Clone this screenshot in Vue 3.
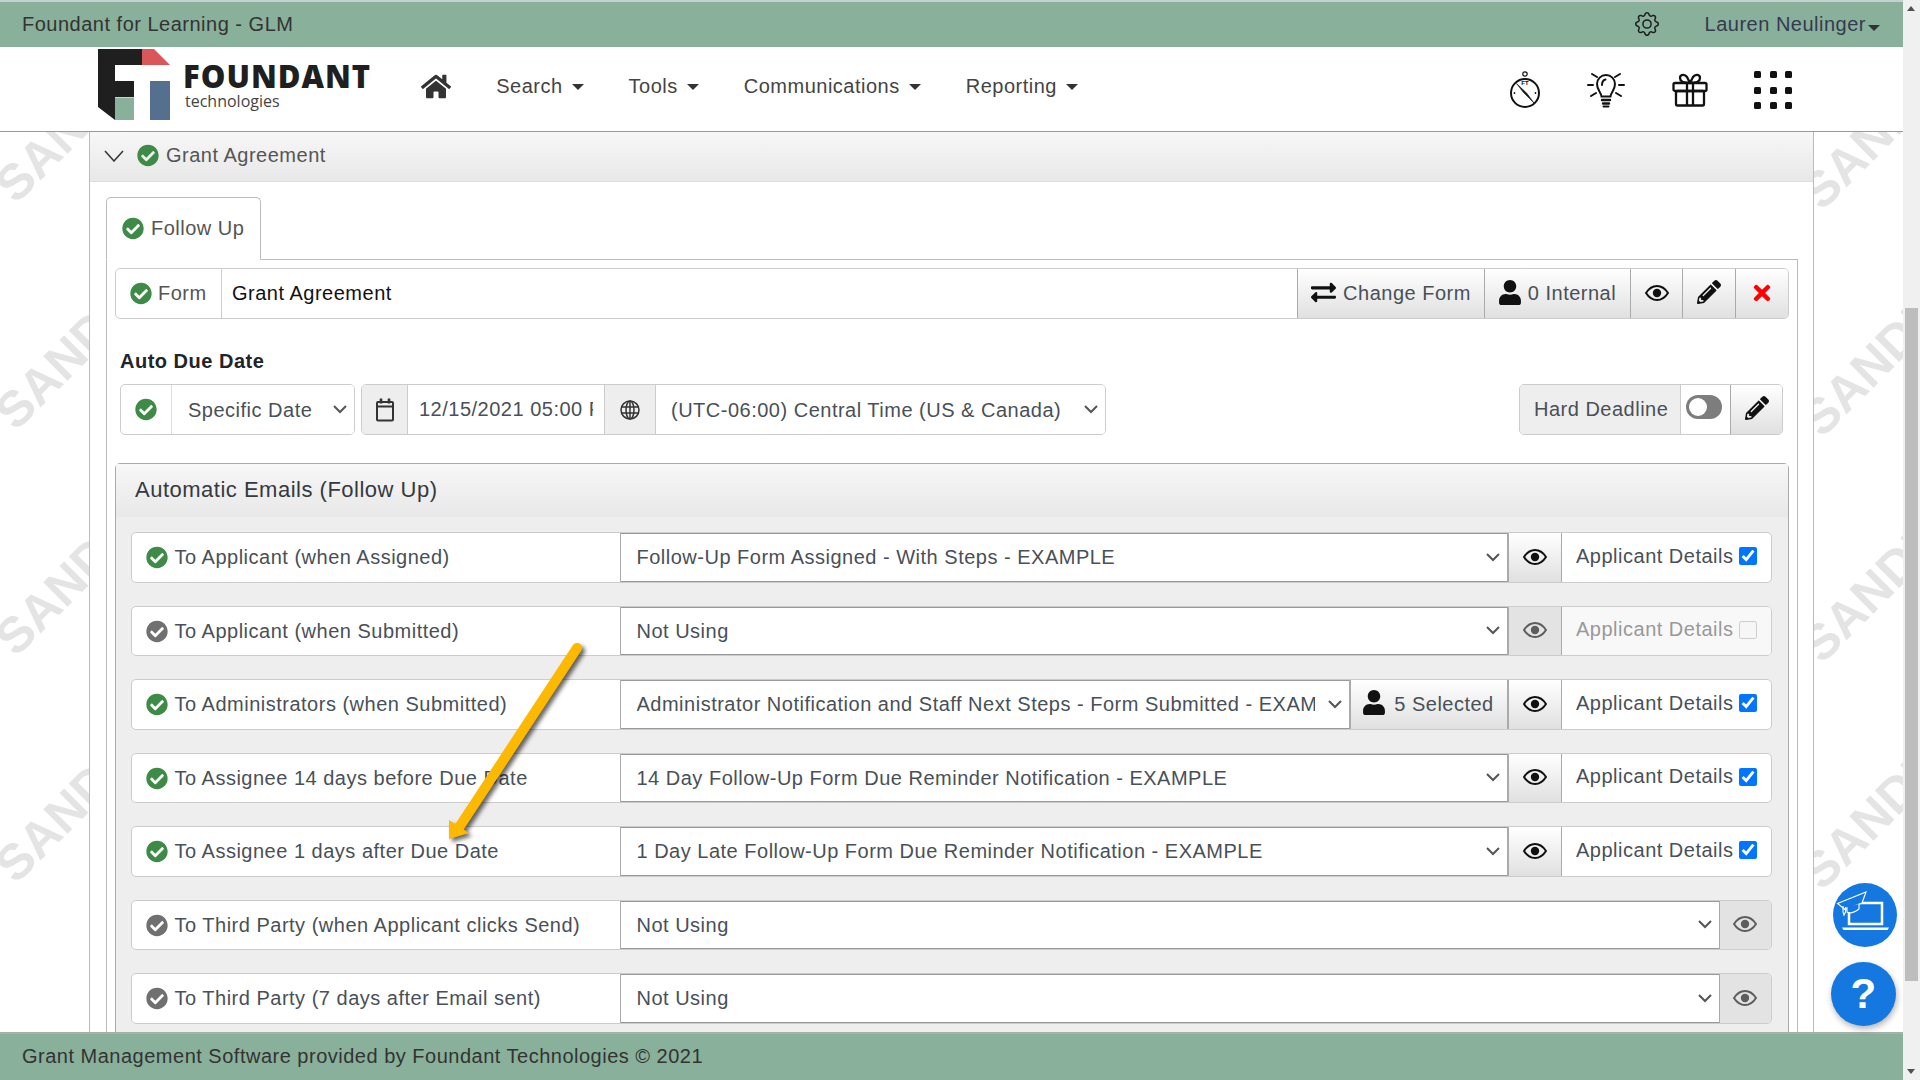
<script setup>
const menus = ["Search", "Tools", "Communications", "Reporting"]

const rows = [
  { label: "To Applicant (when Assigned)", value: "Follow-Up Form Assigned - With Steps - EXAMPLE", on: true, details: true },
  { label: "To Applicant (when Submitted)", value: "Not Using", on: false, details: true },
  { label: "To Administrators (when Submitted)", value: "Administrator Notification and Staff Next Steps - Form Submitted - EXAMPLE", on: true, details: true, selected: "5 Selected" },
  { label: "To Assignee 14 days before Due Date", value: "14 Day Follow-Up Form Due Reminder Notification - EXAMPLE", on: true, details: true },
  { label: "To Assignee 1 days after Due Date", value: "1 Day Late Follow-Up Form Due Reminder Notification - EXAMPLE", on: true, details: true },
  { label: "To Third Party (when Applicant clicks Send)", value: "Not Using", on: false, details: false },
  { label: "To Third Party (7 days after Email sent)", value: "Not Using", on: false, details: false },
]

// the sandbox stamp repeats down both margins
const stamps = []
for (let i = 0; i < 4; i++) {
  stamps.push({ left: 4, top: 36 + i * 226.5 })
  stamps.push({ left: 1810, top: 43 + i * 226.5 })
}

const checkPath = "M504 256c0 136.967-111.033 248-248 248S8 392.967 8 256 119.033 8 256 8s248 111.033 248 248zM227.314 387.314l184-184c6.248-6.248 6.248-16.379 0-22.627l-22.627-22.627c-6.248-6.249-16.379-6.249-22.628 0L216 308.118l-70.059-70.059c-6.248-6.248-16.379-6.248-22.628 0l-22.627 22.627c-6.248 6.248-6.248 16.379 0 22.627l104 104c6.249 6.249 16.379 6.249 22.628.001z"
const pencilPath = "M497.9 142.1l-46.1 46.1c-4.7 4.7-12.3 4.7-17 0l-111-111c-4.7-4.7-4.7-12.3 0-17l46.1-46.1c18.7-18.7 49.1-18.7 67.9 0l60.1 60.1c18.8 18.7 18.8 49.1 0 67.9zM284.2 99.8L21.6 362.4.4 483.9c-2.9 16.4 11.4 30.6 27.8 27.8l121.5-21.3 262.6-262.6c4.7-4.7 4.7-12.3 0-17l-111-111c-4.8-4.7-12.4-4.7-17.1 0zM124.1 339.9c-5.5-5.5-5.5-14.3 0-19.8l154-154c5.5-5.5 14.3-5.5 19.8 0s5.5 14.3 0 19.8l-154 154c-5.5 5.5-14.3 5.5-19.8 0zM88 424h48v36.3l-64.5 11.3-31.1-31.1L51.7 376H88v48z"
const userPath = "M224 256c70.7 0 128-57.3 128-128S294.7 0 224 0 96 57.3 96 128s57.3 128 128 128zm89.6 32h-16.7c-22.2 10.2-46.9 16-72.9 16s-50.6-5.8-72.9-16h-16.7C60.2 288 0 348.2 0 422.4V464c0 26.5 21.5 48 48 48h352c26.5 0 48-21.5 48-48v-41.6c0-74.2-60.2-134.4-134.4-134.4z"
</script>

<template>
  <div class="app">
    <div class="page">
      <div class="topbar">
        <span>Foundant for Learning - GLM</span>
        <svg class="gear" viewBox="0 0 16 16" fill="#1d1d1d">
          <path d="M8 4.754a3.246 3.246 0 1 0 0 6.492 3.246 3.246 0 0 0 0-6.492zM5.754 8a2.246 2.246 0 1 1 4.492 0 2.246 2.246 0 0 1-4.492 0z" />
          <path d="M9.796 1.343c-.527-1.79-3.065-1.79-3.592 0l-.094.319a.873.873 0 0 1-1.255.52l-.292-.16c-1.64-.892-3.433.902-2.54 2.541l.159.292a.873.873 0 0 1-.52 1.255l-.319.094c-1.79.527-1.79 3.065 0 3.592l.319.094a.873.873 0 0 1 .52 1.255l-.16.292c-.892 1.64.901 3.434 2.541 2.54l.292-.159a.873.873 0 0 1 1.255.52l.094.319c.527 1.79 3.065 1.79 3.592 0l.094-.319a.873.873 0 0 1 1.255-.52l.292.16c1.64.893 3.434-.902 2.54-2.541l-.159-.292a.873.873 0 0 1 .52-1.255l.319-.094c1.79-.527 1.79-3.065 0-3.592l-.319-.094a.873.873 0 0 1-.52-1.255l.16-.292c.893-1.64-.902-3.433-2.541-2.54l-.292.159a.873.873 0 0 1-1.255-.52l-.094-.319zm-2.633.283c.246-.835 1.428-.835 1.674 0l.094.319a1.873 1.873 0 0 0 2.693 1.115l.291-.16c.764-.415 1.6.42 1.184 1.185l-.159.292a1.873 1.873 0 0 0 1.116 2.692l.318.094c.835.246.835 1.428 0 1.674l-.319.094a1.873 1.873 0 0 0-1.115 2.693l.16.291c.415.764-.42 1.6-1.185 1.184l-.291-.159a1.873 1.873 0 0 0-2.693 1.116l-.094.318c-.246.835-1.428.835-1.674 0l-.094-.319a1.873 1.873 0 0 0-2.692-1.115l-.292.16c-.764.415-1.6-.42-1.184-1.185l.159-.291A1.873 1.873 0 0 0 1.945 8.93l-.319-.094c-.835-.246-.835-1.428 0-1.674l.319-.094A1.873 1.873 0 0 0 3.06 4.377l-.16-.292c-.415-.764.42-1.6 1.185-1.184l.292.159a1.873 1.873 0 0 0 2.692-1.115l.094-.319z" />
        </svg>
        <span class="user">Lauren Neulinger<i class="caret user-caret"></i></span>
      </div>

      <nav class="nav">
        <div class="logo">
          <svg class="logo-mark" viewBox="0 0 72 71">
            <path fill="#1f1f1f" d="M0 0h44v16H17v16h19v16H17v23L0 58z" />
            <path fill="#d9575b" d="M44 0h12l16 16H44z" />
            <rect fill="#88b09a" x="17" y="48.5" width="19" height="22.5" />
            <rect fill="#55708f" x="52" y="32" width="20" height="39" />
          </svg>
          <div class="logo-text">
            <div class="logo-name">FOUNDANT</div>
            <div class="logo-sub">technologies</div>
          </div>
        </div>
        <svg class="home" viewBox="0 0 576 512" fill="#333">
          <path d="M280.37 148.26L96 300.11V464a16 16 0 0 0 16 16l112.06-.29a16 16 0 0 0 15.92-16V368a16 16 0 0 1 16-16h64a16 16 0 0 1 16 16v95.64a16 16 0 0 0 16 16.05L464 480a16 16 0 0 0 16-16V300L295.67 148.26a12.19 12.19 0 0 0-15.3 0zM571.6 251.47L488 182.56V44.05a12 12 0 0 0-12-12h-56a12 12 0 0 0-12 12v72.61L318.47 43a48 48 0 0 0-61 0L4.34 251.47a12 12 0 0 0-1.6 16.9l25.5 31A12 12 0 0 0 45.15 301l235.22-193.74a12.19 12.19 0 0 1 15.3 0L530.9 301a12 12 0 0 0 16.9-1.6l25.5-31a12 12 0 0 0-1.7-16.93z" />
        </svg>
        <a v-for="m in menus" :key="m" class="menu">{{ m }}<i class="caret"></i></a>

        <div class="nav-icons">
          <svg width="30" height="38" viewBox="0 0 30 38" fill="none" stroke="#111">
            <circle cx="15" cy="3" r="2.2" stroke-width="1.2" />
            <circle cx="15" cy="22" r="14" stroke-width="2" />
            <path d="M6.5 12.5 L17 22.5 L24 32 L13.5 21.5 Z" fill="#111" stroke-width="0.6" />
            <text x="15" y="14" font-size="6" font-weight="700" text-anchor="middle" fill="#111" stroke="none" font-family="Liberation Sans, sans-serif" letter-spacing="0">FT</text>
            <circle cx="4.5" cy="22" r="0.9" fill="#111" stroke="none" />
            <circle cx="25.5" cy="22" r="0.9" fill="#111" stroke="none" />
          </svg>
          <svg width="38" height="36" viewBox="0 0 38 36" fill="none" stroke="#111" stroke-width="2" stroke-linecap="round">
            <path d="M14.5 24.5 C14 20 10 18 10 12 C10 7 14 3 19 3 C24 3 28 7 28 12 C28 18 24 20 23.5 24.5 Z" />
            <path d="M15 13 C15 9.5 16.5 8 18.5 7.5" />
            <path d="M15 28h8M16 31.5h6" stroke-width="2.4" />
            <path d="M16.5 34.5h5" />
            <path d="M5 2l5 3M33 2l-5 3M1 13h5M32 13h5M4 24l5-3M34 24l-5-3" />
          </svg>
          <svg width="36" height="34" viewBox="0 0 36 34" fill="none" stroke="#111" stroke-width="2.3" stroke-linejoin="round">
            <rect x="1.5" y="10" width="33" height="8" rx="1.5" />
            <rect x="4" y="18" width="28" height="14.5" rx="1.5" />
            <path d="M15 10v22.5M21 10v22.5" />
            <path d="M18 10 C14 10 8 9 8 5 C8 1 13 1 15 4 L18 10 L21 4 C23 1 28 1 28 5 C28 9 22 10 18 10Z" />
          </svg>
          <div class="grid-icon"><i v-for="n in 9" :key="n"></i></div>
        </div>
      </nav>

      <main class="main">
        <span v-for="(s, i) in stamps" :key="i" class="stamp" :style="{ left: s.left + 'px', top: s.top + 'px' }">SANDBOX</span>

        <section class="card">
          <header class="card-head">
            <svg class="chev" viewBox="0 0 20 12" fill="none" stroke="#333" stroke-width="1.5"><path d="M1 1l9 10 9-10" /></svg>
            <svg class="check ok" viewBox="0 0 512 512"><path :d="checkPath" /></svg>
            <span class="head-title">Grant Agreement</span>
          </header>

          <div class="card-body">
            <div class="tabs">
              <div class="tab">
                <svg class="check ok" viewBox="0 0 512 512"><path :d="checkPath" /></svg>
                <span>Follow Up</span>
              </div>
            </div>

            <div class="pane">
              <div class="group form-row">
                <div class="form-label">
                  <svg class="check ok" viewBox="0 0 512 512"><path :d="checkPath" /></svg>
                  <span>Form</span>
                </div>
                <div class="form-name">Grant Agreement</div>
                <button class="btn w-change">
                  <svg class="ico-exchange" viewBox="0 0 512 512"><path d="M0 168v-16c0-13.255 10.745-24 24-24h360V80c0-21.367 25.899-32.042 40.971-16.971l80 80c9.372 9.373 9.372 24.569 0 33.941l-80 80C409.956 272.982 384 262.456 384 240v-48H24c-13.255 0-24-10.745-24-24zm488 152H128v-48c0-21.314-25.862-32.08-40.971-16.971l-80 80c-9.372 9.373-9.372 24.569 0 33.941l80 80C102.057 464.973 128 454.544 128 432v-48h360c13.255 0 24-10.745 24-24v-16c0-13.255-10.745-24-24-24z" /></svg>
                  Change Form
                </button>
                <button class="btn w-internal">
                  <svg class="ico-user" viewBox="0 0 448 512"><path :d="userPath" /></svg>
                  0 Internal
                </button>
                <button class="btn w-icon">
                  <svg class="eye" viewBox="0 0 24 17" fill="none" stroke="currentColor" stroke-width="2"><path d="M1 8.5C4.5 3 8 1.5 12 1.5s7.5 1.5 11 7c-3.5 5.5-7 7-11 7s-7.5-1.5-11-7z" /><circle cx="12" cy="8.5" r="4.2" fill="currentColor" stroke="none" /></svg>
                </button>
                <button class="btn w-icon-b">
                  <svg class="ico-pencil" viewBox="0 0 512 512"><path :d="pencilPath" /></svg>
                </button>
                <button class="btn w-icon-b">
                  <svg class="ico-x" viewBox="0 0 352 512" fill="#f00"><path d="M242.72 256l100.07-100.07c12.28-12.28 12.28-32.19 0-44.48l-22.24-22.24c-12.28-12.28-32.19-12.28-44.48 0L176 189.28 75.93 89.21c-12.28-12.28-32.19-12.28-44.48 0L9.21 111.45c-12.28 12.28-12.28 32.19 0 44.48L109.28 256 9.21 356.07c-12.28 12.28-12.28 32.19 0 44.48l22.24 22.24c12.28 12.28 32.2 12.28 44.48 0L176 322.72l100.07 100.07c12.28 12.28 32.2 12.28 44.48 0l22.24-22.24c12.28-12.28 12.28-32.19 0-44.48L242.72 256z" /></svg>
                </button>
              </div>

              <div class="due-title">Auto Due Date</div>
              <div class="due-row">
                <div class="group">
                  <div class="due-check"><svg class="check ok" viewBox="0 0 512 512"><path :d="checkPath" /></svg></div>
                  <select class="sel sel-kind"><option>Specific Date</option></select>
                </div>
                <div class="group">
                  <div class="addon">
                    <svg width="18" height="24" viewBox="0 0 18 24" fill="none" stroke="#333" stroke-width="2"><rect x="1" y="4" width="16" height="18.5" rx="1" /><path d="M1 8.5h16" /><path d="M5 0.5v5M13 0.5v5" stroke-width="2.6" /></svg>
                  </div>
                  <input class="date" value="12/15/2021 05:00 PM" />
                  <div class="addon globe-cell">
                    <svg width="20" height="20" viewBox="0 0 20 20" fill="none" stroke="#333" stroke-width="1.5"><circle cx="10" cy="10" r="9" /><ellipse cx="10" cy="10" rx="4" ry="9" /><path d="M1.5 7h17M1.5 13h17M10 1v18" /></svg>
                  </div>
                  <select class="sel sel-zone"><option>(UTC-06:00) Central Time (US &amp; Canada)</option></select>
                </div>
                <div class="group hard">
                  <div class="hard-label">Hard Deadline</div>
                  <div class="hard-toggle"><span class="toggle"><i></i></span></div>
                  <button class="btn w-hard"><svg class="ico-pencil" viewBox="0 0 512 512"><path :d="pencilPath" /></svg></button>
                </div>
              </div>

              <section class="panel">
                <header class="panel-head">Automatic Emails (Follow Up)</header>
                <div class="panel-body">
                  <div v-for="r in rows" :key="r.label" class="group mail-row">
                    <div class="mail-label">
                      <svg class="check" :class="r.on ? 'ok' : 'off'" viewBox="0 0 512 512"><path :d="checkPath" /></svg>
                      <span>{{ r.label }}</span>
                    </div>
                    <select class="sel sel-mail"><option>{{ r.value }}</option></select>
                    <button v-if="r.selected" class="btn w-selected">
                      <svg class="ico-user" viewBox="0 0 448 512"><path :d="userPath" /></svg>
                      {{ r.selected }}
                    </button>
                    <button class="btn w-eye" :class="{ dim: !r.on, narrow: !r.details }">
                      <svg class="eye" viewBox="0 0 24 17" fill="none" stroke="currentColor" stroke-width="2"><path d="M1 8.5C4.5 3 8 1.5 12 1.5s7.5 1.5 11 7c-3.5 5.5-7 7-11 7s-7.5-1.5-11-7z" /><circle cx="12" cy="8.5" r="4.2" fill="currentColor" stroke="none" /></svg>
                    </button>
                    <label v-if="r.details" class="details" :class="{ dim: !r.on }">
                      Applicant Details
                      <input type="checkbox" :checked="r.on" :disabled="!r.on" />
                    </label>
                  </div>
                </div>
              </section>
            </div>
          </div>
        </section>
      </main>

      <footer class="footer">Grant Management Software provided by Foundant Technologies © 2021</footer>
    </div>

    <div class="scrollbar">
      <i class="sb-up"></i>
      <div class="sb-thumb"></div>
      <i class="sb-down"></i>
    </div>

    <!-- annotation drawn over the form -->
    <svg class="arrow" width="150" height="210" viewBox="0 0 150 210">
      <path d="M137 8L18 189" stroke="#fdb900" stroke-width="10" stroke-linecap="round" fill="none" />
      <path d="M9 199V180L29 193Z" fill="#fdb900" />
    </svg>

    <div class="fab fab-learn">
      <svg width="64" height="64" viewBox="0 0 64 64" fill="none" stroke="#fff">
        <rect x="16" y="20" width="33" height="21" stroke-width="2.5" />
        <path d="M9 44.5h47l-1.5 2.5H10.5z" fill="#fff" stroke="none" />
        <path d="M4.5 20.5L33 9 29 20 12 26.5Z" fill="#1478e0" stroke-width="1.1" />
        <path d="M14 24v5c3 2 8 0 12-3v-5" fill="#1478e0" stroke-width="1.1" />
        <path d="M10 23v6l1 3 1.5-3v-5" stroke-width="1.1" />
      </svg>
    </div>
    <div class="fab fab-help">?</div>
  </div>
</template>

<style>
html, body {
  margin: 0;
  overflow: hidden;
}
</style>

<style scoped>
* {
  box-sizing: border-box;
}

.app {
  position: relative;
  display: flex;
  width: 1920px;
  height: 1080px;
  overflow: hidden;
  background: #fff;
  font-family: "Liberation Sans", Arial, sans-serif;
  font-size: 20px;
  letter-spacing: 0.5px;
  color: #495057;
}

.page {
  display: flex;
  flex-direction: column;
  flex: 1;
  min-width: 0;
}

.topbar {
  display: flex;
  align-items: center;
  flex: none;
  height: 47px;
  padding: 0 23px 0 22px;
  border-top: 2px solid #c9cfcc;
  background: #88b09a;
  color: #333;
}

.gear {
  width: 24px;
  height: 24px;
  margin-left: auto;
  margin-bottom: 2px;
}

.user {
  margin-left: 46px;
  color: #343a50;
}

.caret {
  display: inline-block;
  width: 0;
  height: 0;
  margin-left: 9px;
  vertical-align: 3px;
  border-top: 6px solid #333;
  border-left: 6px solid transparent;
  border-right: 6px solid transparent;
}

.user-caret {
  margin-left: 2px;
  vertical-align: 0;
}

.nav {
  display: flex;
  align-items: center;
  flex: none;
  height: 85px;
  padding: 0 111px 0 98px;
  gap: 45px;
  border-bottom: 1px solid #999;
  background: #fff;
  color: #444;
}

.logo {
  display: flex;
  align-items: flex-start;
  gap: 13px;
  height: 71px;
  margin-top: -9px;
  margin-right: 5px;
}

.logo-mark {
  width: 72px;
  height: 71px;
}

.logo-text {
  padding-top: 13px;
  color: #1f1f1f;
  font-family: "Open Sans", sans-serif;
}

.logo-name {
  font-size: 31px;
  font-weight: 800;
  line-height: 29px;
  letter-spacing: 1px;
}

.logo-sub {
  padding-left: 2px;
  font-size: 16px;
  line-height: 20px;
  letter-spacing: 0;
  color: #444;
}

.home {
  width: 30px;
  height: 27px;
  margin-bottom: 6px;
}

.menu {
  margin-bottom: 5px;
  white-space: nowrap;
}

.nav-icons {
  display: flex;
  align-items: center;
  gap: 47px;
  margin-left: auto;
  margin-top: 2px;
}

.grid-icon {
  display: grid;
  grid-template-columns: repeat(3, 7px);
  gap: 8.5px;
  margin-left: -1px;
}

.grid-icon i {
  width: 7px;
  height: 7px;
  border-radius: 1.5px;
  background: #111;
}

.main {
  position: relative;
  flex: 1;
  min-height: 0;
  overflow: hidden;
}

.stamp {
  position: absolute;
  font-size: 50px;
  font-weight: 700;
  line-height: 1;
  letter-spacing: 0;
  color: #e4e4e4;
  transform: rotate(-45deg);
  transform-origin: left center;
  white-space: nowrap;
}

.card {
  position: relative;
  width: 1725px;
  margin-left: 89px;
  border-left: 1px solid #bbb;
  border-right: 1px solid #bbb;
  background: #fff;
}

.card-head {
  display: flex;
  align-items: center;
  height: 50px;
  padding: 0 0 2px 14px;
  background: linear-gradient(#f7f7f7, #e8e8e8);
  border-bottom: 1px solid #ddd;
  color: #555;
}

.chev {
  width: 20px;
  height: 12px;
  margin-right: 13px;
}

.head-title {
  margin-left: 7px;
}

.check {
  flex: none;
  width: 22px;
  height: 23px;
}

.check.ok {
  fill: #3e8b47;
}

.check.off {
  fill: #707070;
}

.card-body {
  padding: 15px 15px 0 16px;
}

.tabs {
  display: flex;
  height: 63px;
  margin-bottom: -1px;
  position: relative;
}

.tab {
  display: flex;
  align-items: center;
  gap: 7px;
  width: 155px;
  padding-left: 15px;
  border: 1px solid #bbb;
  border-bottom: 1px solid #fff;
  border-radius: 5px 5px 0 0;
  background: #fff;
  color: #555;
}

.pane {
  padding: 8px 8px 20px;
  border: 1px solid #bbb;
  border-bottom: none;
}

.group {
  display: flex;
  border: 1px solid #ccc;
  border-radius: 5px;
  background: #fff;
  overflow: hidden;
}

.form-row {
  height: 51px;
}

.form-label {
  display: flex;
  align-items: center;
  gap: 6px;
  flex: none;
  width: 106px;
  padding-left: 14px;
  border-right: 1px solid #ccc;
  color: #555;
}

.form-name {
  display: flex;
  align-items: center;
  flex: 1;
  padding-left: 10px;
  color: #111;
}

.btn {
  display: flex;
  align-items: center;
  justify-content: center;
  flex: none;
  gap: 7px;
  padding: 0;
  border: none;
  border-left: 1px solid #aaa;
  background: linear-gradient(#fff, #e0e0e0);
  font: inherit;
  letter-spacing: inherit;
  color: #495057;
}

.w-change {
  width: 187px;
}

.w-internal {
  width: 146px;
}

.w-icon {
  width: 52px;
  color: #111;
}

.w-icon-b {
  width: 53px;
}

.w-hard {
  width: 52px;
}

.ico-exchange {
  width: 25px;
  height: 25px;
  fill: #111;
  margin-top: -3px;
}

.ico-user {
  width: 22px;
  height: 25px;
  fill: #111;
  margin-top: -3px;
}

.ico-pencil {
  width: 24px;
  height: 24px;
  fill: #111;
  margin-top: -3px;
}

.ico-x {
  width: 18px;
  height: 24px;
  margin-top: -2px;
}

.eye {
  width: 24px;
  height: 18px;
  margin-top: -1px;
}

.due-title {
  margin: 31px 0 0 5px;
  height: 34px;
  font-weight: 700;
  color: #212529;
}

.due-row {
  display: flex;
  gap: 6px;
  height: 51px;
  margin: 0 6px 0 5px;
}

.due-check {
  display: flex;
  align-items: center;
  justify-content: center;
  flex: none;
  width: 51px;
  border-right: 1px solid #ddd;
}

.sel {
  min-width: 0;
  padding-right: 34px;
  border: none;
  appearance: none;
  background: #fff url("data:image/svg+xml,%3Csvg xmlns='http://www.w3.org/2000/svg' width='14' height='9' fill='none' stroke='%23555' stroke-width='2'%3E%3Cpath d='M1 1l6 6 6-6'/%3E%3C/svg%3E") no-repeat right 7px center;
  font: inherit;
  letter-spacing: inherit;
  color: #495057;
  outline: none;
}

.sel-kind {
  width: 182px;
  padding-left: 16px;
}

.sel-zone {
  width: 449px;
  padding-left: 15px;
}

.addon {
  display: flex;
  align-items: center;
  justify-content: center;
  flex: none;
  width: 46px;
  background: #eee;
  border-right: 1px solid #ccc;
}

.globe-cell {
  width: 52px;
  border-left: 1px solid #ccc;
}

.date {
  width: 196px;
  padding: 0 11px;
  border: none;
  background: #fff;
  font: inherit;
  letter-spacing: inherit;
  color: #495057;
  outline: none;
}

.hard {
  margin-left: auto;
}

.hard-label {
  display: flex;
  align-items: center;
  width: 161px;
  padding-left: 14px;
  background: #eee;
  border-right: 1px solid #ccc;
}

.hard-toggle {
  flex: none;
  width: 49px;
  padding: 10px 0 0 5px;
}

.toggle {
  display: block;
  width: 36px;
  height: 24px;
  padding: 3px;
  border-radius: 12px;
  background: #7d7d7d;
}

.toggle i {
  display: block;
  width: 18px;
  height: 18px;
  border-radius: 50%;
  background: #fff;
}

.panel {
  margin-top: 27.5px;
  border: 1px solid #aaa;
  border-radius: 5px 5px 0 0;
  background: #eee;
}

.panel-head {
  display: flex;
  align-items: center;
  height: 53px;
  padding-left: 19px;
  background: linear-gradient(#f7f7f7, #e8e8e8);
  font-size: 22px;
  color: #343a40;
}

.panel-body {
  display: flex;
  flex-direction: column;
  gap: 23px;
  padding: 15.5px 16.5px 20px 14.5px;
}

.mail-row {
  flex: none;
  height: 50.5px;
}

.mail-label {
  display: flex;
  align-items: center;
  gap: 7px;
  flex: none;
  width: 489px;
  padding: 1px 0 0 14px;
  border-right: 1px solid #aaa;
}

.sel-mail {
  flex: 1;
  padding-left: 16px;
  border-top: 1px solid #999;
  border-bottom: 1px solid #999;
}

.w-selected {
  width: 158px;
  gap: 9px;
  border-left: 2px solid #aaa;
}

.w-eye {
  width: 55px;
  color: #111;
  border-left: 2px solid #aaa;
  border-right: 1px solid #aaa;
}

.w-eye.dim {
  background: #e3e3e3;
  color: #5d5d5d;
}

.w-eye.narrow {
  width: 52px;
  border-right: none;
  border-left: 1px solid #aaa;
}

.details {
  display: flex;
  align-items: center;
  justify-content: flex-end;
  gap: 5px;
  flex: none;
  width: 209px;
  padding: 0 14px 2px 0;
}

.details.dim {
  background: #f8f8f8;
  color: #999;
}

.details input {
  width: 18px;
  height: 18px;
  margin: 0;
}

.footer {
  display: flex;
  align-items: center;
  flex: none;
  height: 48px;
  padding: 0 0 1px 22px;
  border-top: 2px solid #a8b0ac;
  background: #88b09a;
  color: #333;
  position: relative;
}

.scrollbar {
  position: relative;
  flex: none;
  width: 17px;
  background: #f0f0f0;
}

.sb-thumb {
  width: 13px;
  height: 673px;
  margin: 308px 0 0 2px;
  background: #bdbdbd;
}

.sb-up,
.sb-down {
  position: absolute;
  left: 4px;
  border-left: 4.5px solid transparent;
  border-right: 4.5px solid transparent;
}

.sb-up {
  top: 6px;
  border-bottom: 5px solid #505050;
}

.sb-down {
  bottom: 6px;
  border-top: 5px solid #505050;
}

.arrow {
  position: absolute;
  left: 440px;
  top: 640px;
  filter: drop-shadow(3px 3px 2px rgba(0, 0, 0, 0.6));
}

.fab {
  position: absolute;
  display: flex;
  align-items: center;
  justify-content: center;
  border-radius: 50%;
  background: #1478e0;
  color: #fff;
}

.fab-learn {
  left: 1833px;
  top: 883px;
  width: 64px;
  height: 64px;
}

.fab-help {
  left: 1831px;
  top: 962px;
  width: 65px;
  height: 64px;
  font-size: 42px;
  font-weight: 700;
  box-shadow: 1px 3px 6px rgba(0, 0, 0, 0.3);
}
</style>
